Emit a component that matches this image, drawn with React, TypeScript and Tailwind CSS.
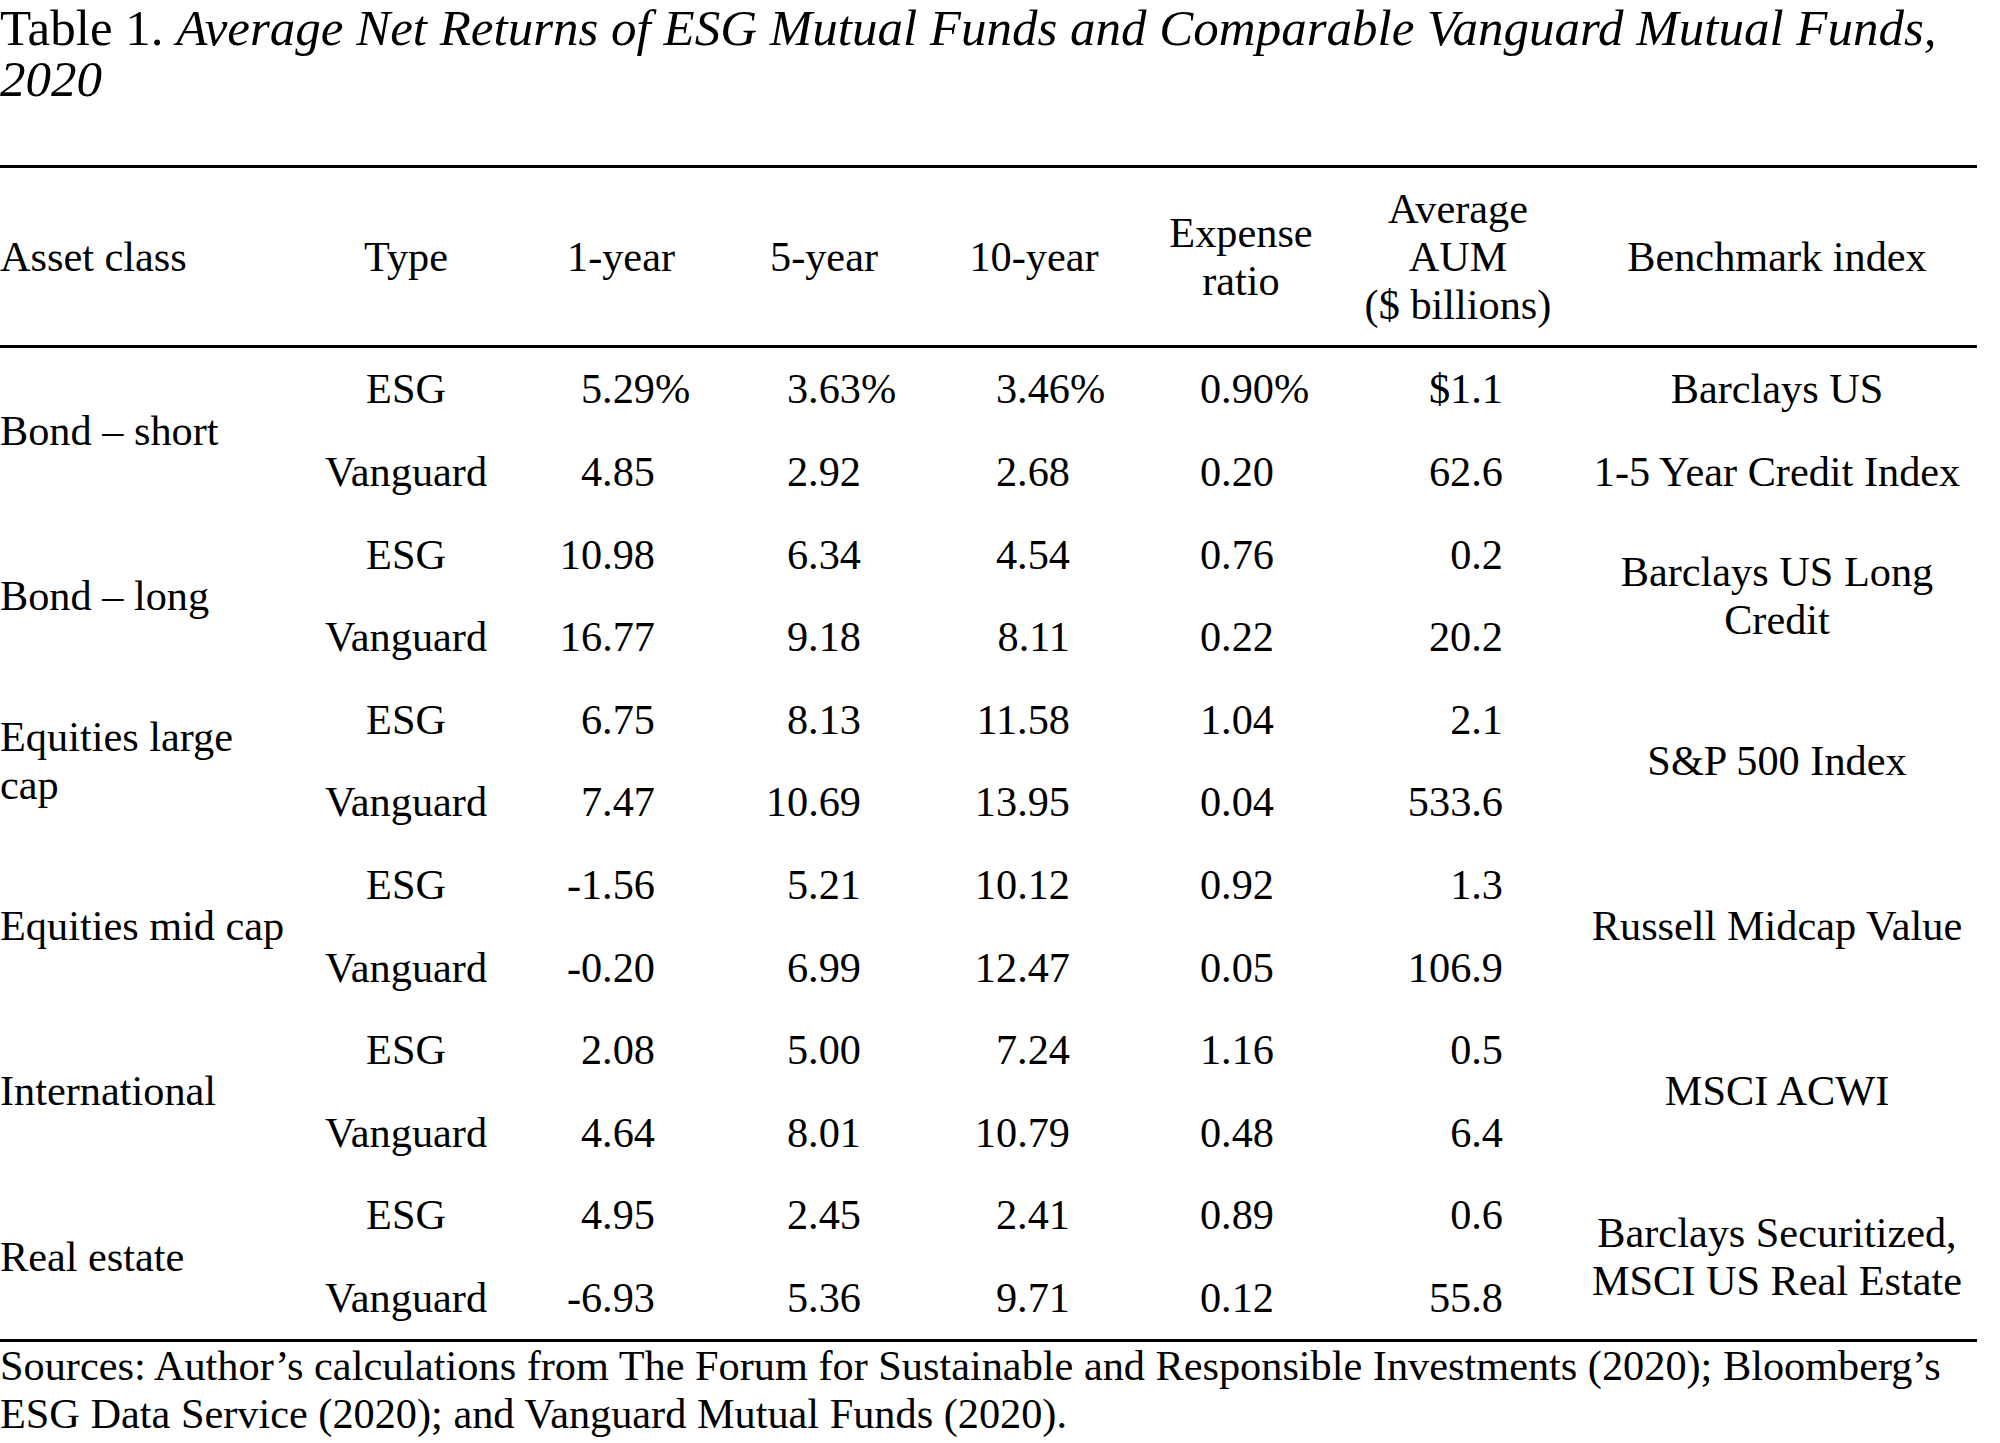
import React from "react";

const COLS = "grid grid-cols-[300px_212px_218px_188px_232px_182px_252px_386px]";

type Row = {
  type: string;
  v: [string, string, string, string, string];
};

type Group = {
  asset: React.ReactNode;
  rows: [Row, Row];
  bench: React.ReactNode;
  splitBench?: [string, string];
};

const PR = ["pr-[75px]", "pr-[57px]", "pr-[80px]", "pr-[58px]", "pr-[81px]"];

const groups: Group[] = [
  {
    asset: "Bond – short",
    rows: [
      { type: "ESG", v: ["5.29%", "3.63%", "3.46%", "0.90%", "$1.1"] },
      { type: "Vanguard", v: ["4.85", "2.92", "2.68", "0.20", "62.6"] },
    ],
    bench: null,
    splitBench: ["Barclays US", "1-5 Year Credit Index"],
  },
  {
    asset: "Bond – long",
    rows: [
      { type: "ESG", v: ["10.98", "6.34", "4.54", "0.76", "0.2"] },
      { type: "Vanguard", v: ["16.77", "9.18", "8.11", "0.22", "20.2"] },
    ],
    bench: (
      <>
        Barclays US Long
        <br />
        Credit
      </>
    ),
  },
  {
    asset: (
      <>
        Equities large
        <br />
        cap
      </>
    ),
    rows: [
      { type: "ESG", v: ["6.75", "8.13", "11.58", "1.04", "2.1"] },
      { type: "Vanguard", v: ["7.47", "10.69", "13.95", "0.04", "533.6"] },
    ],
    bench: "S&P 500 Index",
  },
  {
    asset: "Equities mid cap",
    rows: [
      { type: "ESG", v: ["-1.56", "5.21", "10.12", "0.92", "1.3"] },
      { type: "Vanguard", v: ["-0.20", "6.99", "12.47", "0.05", "106.9"] },
    ],
    bench: "Russell Midcap Value",
  },
  {
    asset: "International",
    rows: [
      { type: "ESG", v: ["2.08", "5.00", "7.24", "1.16", "0.5"] },
      { type: "Vanguard", v: ["4.64", "8.01", "10.79", "0.48", "6.4"] },
    ],
    bench: "MSCI ACWI",
  },
  {
    asset: "Real estate",
    rows: [
      { type: "ESG", v: ["4.95", "2.45", "2.41", "0.89", "0.6"] },
      { type: "Vanguard", v: ["-6.93", "5.36", "9.71", "0.12", "55.8"] },
    ],
    bench: (
      <>
        Barclays Securitized,
        <br />
        MSCI US Real Estate
      </>
    ),
  },
];

function Num({ value, idx }: { value: string; idx: number }) {
  const hasPct = value.endsWith("%");
  const num = hasPct ? value.slice(0, -1) : value;
  return (
    <div className={`flex items-center justify-end ${PR[idx]}`}>
      <span className="whitespace-nowrap">{num}</span>
      {hasPct ? <span className="w-0 min-w-0 shrink-0 whitespace-nowrap">%</span> : null}
    </div>
  );
}

function GroupRows({ g }: { g: Group }) {
  return (
    <div className={`${COLS} grid-rows-[82.6px_82.6px] items-center`}>
      <div className="row-span-2 text-left">{g.asset}</div>
      {g.rows.map((r, ri) => (
        <React.Fragment key={ri}>
          <div className="text-center">{r.type}</div>
          {r.v.map((val, i) => (
            <Num key={i} value={val} idx={i} />
          ))}
          {g.splitBench ? (
            <div className="text-center whitespace-nowrap">{g.splitBench[ri]}</div>
          ) : ri === 0 ? (
            <div className="row-span-2 text-center">{g.bench}</div>
          ) : null}
        </React.Fragment>
      ))}
    </div>
  );
}

export default function App() {
  return (
    <div className="min-h-screen w-full bg-white text-black font-['Liberation_Serif','Times_New_Roman',serif]">
      <div className="w-[1977px]">
        <div className="text-[51px] whitespace-nowrap">
          <div className="leading-[56.5px]">
            Table 1. <span className="italic">Average Net Returns of ESG Mutual Funds and Comparable Vanguard Mutual Funds,</span>
          </div>
          <div className="leading-[44.6px] italic">2020</div>
        </div>

        <div className="mt-[64px] h-[3px] bg-black" />

        <div className={`${COLS} h-[177px] items-center text-[42.3px] leading-[48px]`}>
          <div className="text-left">Asset class</div>
          <div className="text-center">Type</div>
          <div className="text-center">1-year</div>
          <div className="text-center">5-year</div>
          <div className="text-center">10-year</div>
          <div className="text-center">
            Expense
            <br />
            ratio
          </div>
          <div className="text-center">
            Average
            <br />
            AUM
            <br />
            ($ billions)
          </div>
          <div className="text-center">Benchmark index</div>
        </div>

        <div className="h-[3px] bg-black" />

        <div className="text-[42.3px] leading-[48px]">
          {groups.map((g, i) => (
            <GroupRows key={i} g={g} />
          ))}
        </div>

        <div className="h-[3px] bg-black" />

        <div className="text-[42.3px] leading-[48px] whitespace-nowrap">
          Sources: Author’s calculations from The Forum for Sustainable and Responsible Investments (2020); Bloomberg’s
          <br />
          ESG Data Service (2020); and Vanguard Mutual Funds (2020).
        </div>
      </div>
    </div>
  );
}
